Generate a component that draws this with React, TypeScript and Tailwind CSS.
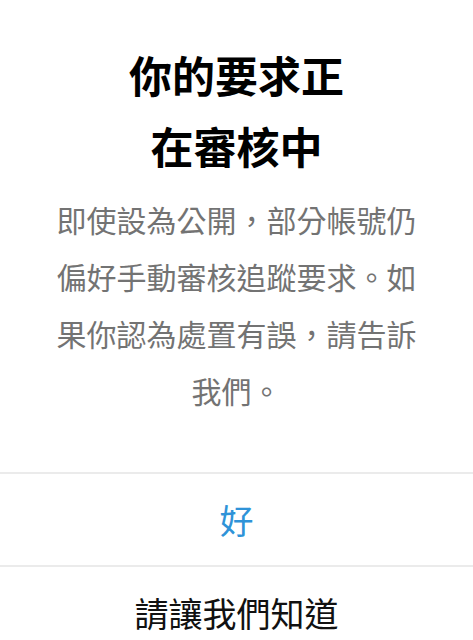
import React from "react";

export default function App() {
  const font = { fontFamily: '"Noto Sans CJK TC", "Noto Sans CJK SC", sans-serif' };
  return (
    <div className="w-[473px] h-[640px] overflow-hidden bg-white" style={font}>
      <div className="flex flex-col items-center px-[54px] pt-[39px]">
        <h1 className="text-[43px] leading-[71px] font-bold text-black text-center">
          你的要求正
          <br />
          在審核中
        </h1>
        <p className="mt-[10px] text-[30px] leading-[57px] text-[#737373] text-center">
          即使設為公開，部分帳號仍偏好手動審核追蹤要求。如果你認為處置有誤，請告訴我們。
        </p>
      </div>
      <div className="mt-[53px] border-t-2 border-[#ebebeb]">
        <button className="w-full h-[91px] flex items-center justify-center text-[34px] text-[#2f93d8]">
          好
        </button>
      </div>
      <div className="border-t-2 border-[#ebebeb]">
        <button className="w-full h-[91px] flex items-center justify-center text-[34px] text-[#111]">
          請讓我們知道
        </button>
      </div>
    </div>
  );
}
